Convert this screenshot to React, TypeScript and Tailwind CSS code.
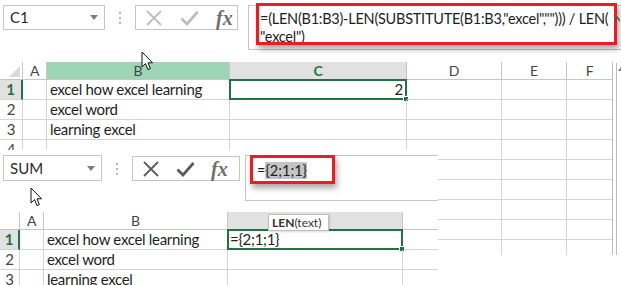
import type { ReactNode } from 'react';

// ---- pieces of the Excel chrome ----
function NameBox({ text, className }: { text: string; className: string }) {
  return (
    <div className={`flex shrink-0 items-center justify-between border border-[#c6c6c6] bg-white pl-[6px] pr-[6px] text-[15px] text-[#2b2b2b] ${className}`}>
      <span>{text}</span>
      <svg width="8" height="5" viewBox="0 0 8 5">
        <path d="M0 0 H8 L4 5 Z" fill="#7c7c7c" />
      </svg>
    </div>
  );
}

function Dots({ className }: { className: string }) {
  return (
    <div className={`flex shrink-0 flex-col gap-[3px] ${className}`}>
      <span className="h-[2px] w-[2px] bg-[#b4b4b4]" />
      <span className="h-[2px] w-[2px] bg-[#b4b4b4]" />
      <span className="h-[2px] w-[2px] bg-[#b4b4b4]" />
    </div>
  );
}

function EditButtons({ active, className }: { active: boolean; className: string }) {
  const stroke = active ? '#5c5c5c' : '#bdbdbd';
  return (
    <div className={`flex shrink-0 items-center border border-[#c6c6c6] bg-white ${className}`}>
      <svg width="18" height="16" viewBox="0 0 18 16">
        <path d="M2 1 L16 15 M16 1 L2 15" stroke={stroke} strokeWidth="1.8" />
      </svg>
      <svg width="19" height="16" viewBox="0 0 19 16">
        <path d="M1.5 8.5 L7 14 L17.5 2" stroke={stroke} strokeWidth="2.8" fill="none" />
      </svg>
      <span className="font-['Liberation_Serif',serif] text-[20px] font-bold italic leading-none text-[#6e6e6e]">fx</span>
    </div>
  );
}

function Pointer() {
  return (
    <svg width="13" height="21" viewBox="0 0 13 21">
      <path
        d="M1 1 L1 16 L4.5 12.6 L7 18.6 L9.4 17.6 L7 11.8 L11.6 11.8 Z"
        fill="white"
        stroke="#111"
        strokeWidth="1"
        strokeLinejoin="round"
      />
    </svg>
  );
}

function Corner() {
  return (
    <svg className="absolute bottom-[2px] right-[2px]" width="11" height="11" viewBox="0 0 11 11">
      <path d="M11 0 V11 H0 Z" fill="#d9d9d9" />
    </svg>
  );
}

function Selection() {
  return (
    <div className="pointer-events-none absolute -left-[1px] -top-[1px] -right-[1px] -bottom-[1px] border-2 border-[#217346]">
      <span className="absolute -bottom-[4px] -right-[4px] h-[6px] w-[6px] border border-white bg-[#217346]" />
    </div>
  );
}

function RowHead({ n, sel, width }: { n: number; sel: boolean; width: string }) {
  return sel ? (
    <div className={`${width} shrink-0 border-b border-r-2 border-b-[#d4d4d4] border-r-[#217346] bg-[#e1e1e1] text-center font-bold text-[#217346]`}>{n}</div>
  ) : (
    <div className={`${width} shrink-0 border-b border-r border-[#d4d4d4] text-center text-[#444]`}>{n}</div>
  );
}

function Cell({ width, children, className = '' }: { width: string; children?: ReactNode; className?: string }) {
  return <div className={`relative shrink-0 ${width} border-b border-r border-[#d4d4d4] ${className}`}>{children}</div>;
}

type Row = { n: number; b?: string; c?: string };

// ---- first screenshot (C1 selected, result 2) ----
function TopShot() {
  const rows: Row[] = [
    { n: 1, b: 'excel how excel learning', c: '2' },
    { n: 2, b: 'excel word' },
    { n: 3, b: 'learning excel' },
    { n: 4 }, { n: 5 }, { n: 6 }, { n: 7 }, { n: 8 }, { n: 9 },
  ];
  return (
    <div className="absolute left-0 top-0 h-[255px] w-[621px] overflow-hidden bg-white">
      <div className="flex h-[62px] items-start pl-[3px] pt-[5px]">
        <NameBox text="C1" className="h-[25px] w-[102px]" />
        <Dots className="ml-[14px] mt-[7px]" />
        <EditButtons active={false} className="ml-[14px] h-[25px] w-[103px] gap-[17px] pl-[9px]" />
        <div className="relative ml-[10px] h-[45px] min-w-0 flex-1 border border-r-0 border-[#c6c6c6] pl-[11px] pt-[4px] text-[14.5px] leading-[18px] tracking-[-0.25px] text-[#1e1e1e]">
          <div className="whitespace-nowrap">=(LEN(B1:B3)-LEN(SUBSTITUTE(B1:B3,"excel",""))) / LEN(</div>
          <div>"excel")</div>
          <div className="absolute -top-[3px] left-[7px] h-[42px] w-[361px] border-[3px] border-[#ec1c24] shadow-[2px_4px_6px_rgba(0,0,0,0.35)]" />
          <svg className="absolute right-[1px] top-[9px]" width="6" height="8" viewBox="0 0 6 8">
            <path d="M0 6 L3 2 L6 6" stroke="#555" strokeWidth="1.5" fill="none" />
          </svg>
        </div>
      </div>

      <div className="flex text-[15px] tracking-[-0.3px]">
        <div className="w-[612px] shrink-0">
          <div className="flex h-[18px] text-[14px] leading-[17px] text-[#444]">
            <div className="relative w-[23px] shrink-0 border-b border-r border-[#c6c6c6]"><Corner /></div>
            <div className="w-[24px] shrink-0 border-b border-r border-[#c6c6c6] text-center">A</div>
            <div className="w-[183px] shrink-0 border-b border-r border-[#c6c6c6] bg-[#9fd5b7] text-center">B</div>
            <div className="w-[177px] shrink-0 border-b border-r border-[#c6c6c6] bg-[#e1e1e1] text-center font-bold text-[#217346]">C</div>
            <div className="w-[95px] shrink-0 border-b border-r border-[#c6c6c6] text-center">D</div>
            <div className="w-[65px] shrink-0 border-b border-r border-[#c6c6c6] text-center">E</div>
            <div className="w-[45px] shrink-0 border-b border-[#c6c6c6] text-center">F</div>
          </div>
          {rows.map(r => (
            <div key={r.n} className="flex h-[20px] leading-[19px] text-[#1e1e1e]">
              <RowHead n={r.n} sel={r.n === 1} width="w-[23px]" />
              <Cell width="w-[24px]" />
              <Cell width="w-[183px]" className="whitespace-nowrap pl-[3px]">{r.b}</Cell>
              <Cell width="w-[177px]" className="pr-[3px] text-right">
                {r.c}
                {r.n === 1 && <Selection />}
              </Cell>
              <Cell width="w-[95px]" />
              <Cell width="w-[65px]" />
              <div className="w-[45px] shrink-0 border-b border-[#d4d4d4]" />
            </div>
          ))}
        </div>
        <div className="flex w-[9px] shrink-0 border-l border-[#bdbdbd] pt-[1px]">
          <div className="ml-[3px] flex-1 border-l border-[#bdbdbd] pl-[1px] pt-[4px]">
            <svg width="5" height="4" viewBox="0 0 5 4">
              <path d="M0 4 L2.5 0 L5 4 Z" fill="#8a8a8a" />
            </svg>
          </div>
        </div>
      </div>

      <div className="absolute left-[141px] top-[51px]"><Pointer /></div>
    </div>
  );
}

// ---- second screenshot (editing, F9 result) ----
function BottomShot() {
  const rows: Row[] = [
    { n: 1, b: 'excel how excel learning', c: '={2;1;1}' },
    { n: 2, b: 'excel word' },
    { n: 3, b: 'learning excel' },
  ];
  return (
    <div className="absolute left-0 top-[150px] h-[135px] w-[438px] overflow-hidden bg-white">
      <div className="flex h-[62px] items-start pl-[3px] pt-[5px]">
        <NameBox text="SUM" className="h-[26px] w-[99px]" />
        <Dots className="ml-[14px] mt-[8px]" />
        <EditButtons active className="ml-[14px] mt-[1px] h-[25px] w-[108px] gap-[16px] pl-[9px]" />
        <div className="relative ml-[5px] h-[46px] w-[200px] shrink-0 border border-r-0 border-[#c6c6c6] pl-[11px] pt-[6px] text-[14.5px] leading-[18px] text-[#1e1e1e]">
          <span>=</span>
          <span className="bg-[#c4c4c4]">{'{2;1;1}'}</span>
          <div className="absolute -top-[1px] left-[4px] h-[29px] w-[85px] border-[3px] border-[#ec1c24] shadow-[2px_4px_6px_rgba(0,0,0,0.35)]" />
        </div>
      </div>

      <div className="text-[15px] tracking-[-0.3px]">
        <div className="flex h-[18px] text-[14px] leading-[17px] text-[#444]">
          <div className="relative w-[20px] shrink-0 border-b border-r border-[#c6c6c6]" />
          <div className="w-[24px] shrink-0 border-b border-r border-[#c6c6c6] text-center">A</div>
          <div className="w-[184px] shrink-0 border-b border-r border-[#c6c6c6] text-center">B</div>
          <div className="w-[175px] shrink-0 border-b border-r border-[#c6c6c6] bg-[#e1e1e1] text-center font-bold text-[#217346]">C</div>
          <div className="w-[100px] shrink-0 border-b border-[#c6c6c6]" />
        </div>
        {rows.map(r => (
          <div key={r.n} className="flex h-[20px] leading-[19px] text-[#1e1e1e]">
            <RowHead n={r.n} sel={r.n === 1} width="w-[20px]" />
            <Cell width="w-[24px]" />
            <Cell width="w-[184px]" className="whitespace-nowrap pl-[3px]">{r.b}</Cell>
            <Cell width="w-[175px]" className="pl-[2px]">
              {r.c}
              {r.n === 1 && <Selection />}
            </Cell>
            <div className="w-[100px] shrink-0 border-b border-[#d4d4d4]" />
          </div>
        ))}
      </div>

      <div className="absolute left-[268px] top-[64px] flex h-[17px] w-[61px] items-center border border-[#bdbdbd] bg-white pl-[3px] text-[12px] leading-none text-[#333] shadow-[1px_1px_2px_rgba(0,0,0,0.15)]">
        <span className="font-bold">LEN</span>(text)
      </div>

      <div className="absolute left-[30px] top-[37px]"><Pointer /></div>
    </div>
  );
}

export default function App() {
  return (
    <div className="relative h-[285px] w-[621px] overflow-hidden bg-white font-['Lato','Liberation_Sans',sans-serif]">
      <TopShot />
      <BottomShot />
    </div>
  );
}
